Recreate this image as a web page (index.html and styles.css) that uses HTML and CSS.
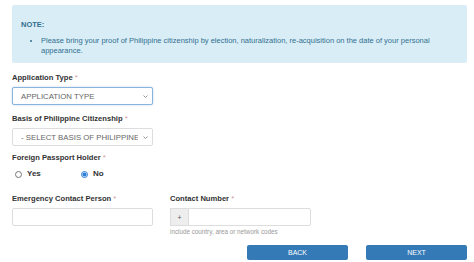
FILE: index.html
```html
<!DOCTYPE html>
<html lang="en">
<head>
    <meta charset="UTF-8">
    <meta name="viewport" content="width=device-width, initial-scale=1.0">
    <title>Application Details</title>
    <link rel="stylesheet" href="styles.css">
</head>
<body>
    <div class="container">
        <div class="note">
            <strong>NOTE:</strong>
            <ul>
                <li>Please bring your proof of Philippine citizenship by election, naturalization, re-acquisition on the date of your personal appearance.</li>
            </ul>
        </div>

        <div class="field first">
            <label>Application Type <span class="req">*</span></label>
            <select class="control focused">
                <option>APPLICATION TYPE</option>
            </select>
        </div>

        <div class="field">
            <label>Basis of Philippine Citizenship <span class="req">*</span></label>
            <select class="control">
                <option>- SELECT BASIS OF PHILIPPINE CITIZENSHIP -</option>
            </select>
        </div>

        <div class="field passport">
            <label>Foreign Passport Holder <span class="req">*</span></label>
            <div class="radios">
                <label class="radio"><input type="radio" name="fph"> Yes</label>
                <label class="radio"><input type="radio" name="fph" checked> No</label>
            </div>
        </div>

        <div class="row">
            <div class="col">
                <label>Emergency Contact Person <span class="req">*</span></label>
                <input type="text" class="control">
            </div>
            <div class="col">
                <label>Contact Number <span class="req">*</span></label>
                <div class="input-group">
                    <span class="addon">+</span>
                    <input type="text" class="control">
                </div>
                <div class="hint">include country, area or network codes</div>
            </div>
        </div>

        <div class="actions">
            <button>BACK</button>
            <button>NEXT</button>
        </div>
    </div>
</body>
</html>
```
FILE: styles.css
```css
body { font-family: "Liberation Sans", Arial, sans-serif; margin: 0; color: #333; background: #fff; }
.container { padding: 5px 7px 0 12px; }
.note { background: #d9edf7; color: #31708f; padding: 15px 9px 3px 9px; font-size: 7.5px; line-height: 9.5px; border-radius: 2px; }
.note strong { display: block; line-height: 10px; margin-bottom: 6px; }
.note ul { margin: 0; padding-left: 20px; }
.note li { margin-bottom: 5px; }

.field { margin-top: 9px; }
.field.first { margin-top: 10px; }
.field.passport { margin-top: 7px; }
label { display: block; font-size: 7.6px; line-height: 10px; font-weight: bold; margin-bottom: 4px; }
.req { color: #c99; font-weight: normal; }

.control { display: block; box-sizing: border-box; width: 141px; height: 18px; margin: 0; border: 1px solid #ddd; border-radius: 2px; background: #fff; font-family: inherit; font-size: 7.8px; color: #666; padding: 0 8px; }
select.control { appearance: none; -webkit-appearance: none; background: #fff url("data:image/svg+xml,%3Csvg xmlns='http://www.w3.org/2000/svg' width='5' height='3'%3E%3Cpath d='M0.5 0.5 L2.5 2.5 L4.5 0.5' fill='none' stroke='%23888' stroke-width='0.9'/%3E%3C/svg%3E") no-repeat right 4px center; padding-right: 14px; }
.focused { border-color: #8ab4de; box-shadow: 0 0 2px rgba(102,160,220,0.5); }

.radios { display: flex; height: 10px; padding-left: 3px; margin-top: 6px; }
.radio { display: flex; align-items: center; width: 66px; margin: 0; font-size: 8px; }
.radio input { width: 7px; height: 7px; margin: 0 5px 0 0; accent-color: #2d7fd6; }

.row { display: flex; margin-top: 15px; }
.col { width: 158px; }
.input-group { display: flex; width: 141px; }
.addon { box-sizing: border-box; width: 18px; height: 18px; background: #eee; border: 1px solid #ddd; border-right: none; font-size: 7px; color: #555; display: flex; align-items: center; justify-content: center; }
.input-group .control { width: 123px; border-radius: 0 2px 2px 0; }
.hint { font-size: 6.3px; line-height: 8px; color: #999; margin-top: 2px; }

.actions { display: flex; justify-content: flex-end; gap: 18px; margin-top: 9px; }
button { width: 101px; height: 15px; background: #337ab7; color: #fff; border: none; border-radius: 2px; font-family: inherit; font-size: 7px; cursor: pointer; }
button:hover { background: #286090; }
```
